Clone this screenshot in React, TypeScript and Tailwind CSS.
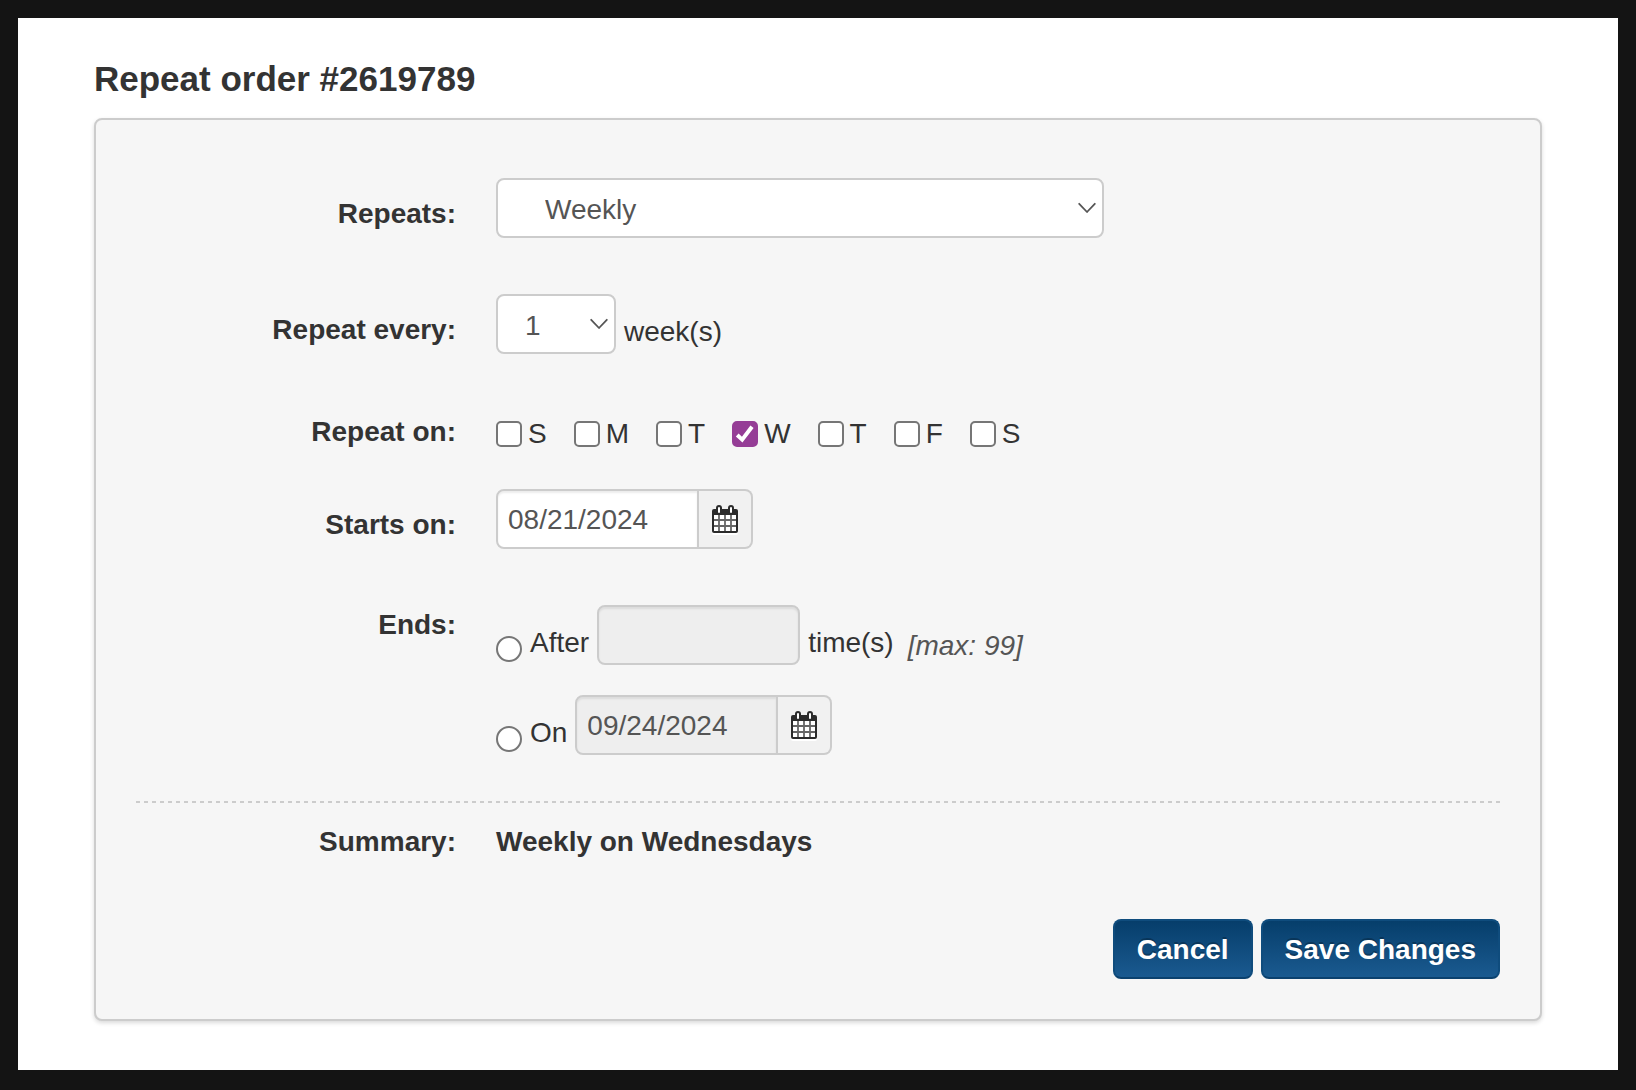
import React, { useState } from 'react';

const DAYS = [
  { id: 'sun', label: 'S' },
  { id: 'mon', label: 'M' },
  { id: 'tue', label: 'T' },
  { id: 'wed', label: 'W' },
  { id: 'thu', label: 'T' },
  { id: 'fri', label: 'F' },
  { id: 'sat', label: 'S' },
];

const Chevron: React.FC = () => (
  <svg
    className="pointer-events-none absolute top-6 right-2 h-3 w-[18px]"
    viewBox="0 0 18 12"
    fill="none"
    stroke="#555"
    strokeWidth="1.8"
    strokeLinecap="round"
    strokeLinejoin="round"
  >
    <path d="M1.2 1.8 L9 10 L16.8 1.8" />
  </svg>
);

const CalendarIcon: React.FC = () => (
  <svg className="h-[30px] w-[26px]" viewBox="0 0 26 30">
    <rect x="0" y="6" width="26" height="24" rx="2" fill="#fff" />
    <rect x="0" y="4" width="26" height="24" rx="2" fill="#2b2b2b" />
    <rect x="4" y="0" width="6" height="9" rx="3" fill="#2b2b2b" />
    <rect x="16" y="0" width="6" height="9" rx="3" fill="#2b2b2b" />
    <rect x="6" y="2" width="2" height="6" rx="1" fill="#fff" />
    <rect x="18" y="2" width="2" height="6" rx="1" fill="#fff" />
    <rect x="2" y="10" width="22" height="16" fill="#fff" />
    <path d="M7 10v16M13 10v16M19 10v16M2 15h22M2 21h22" stroke="#666" strokeWidth="1.8" />
  </svg>
);

interface RowProps {
  label: string;
  htmlFor?: string;
  className?: string;
  children: React.ReactNode;
}

const Row: React.FC<RowProps> = ({ label, htmlFor, className = '', children }) => (
  <div className={`flex items-start gap-10 ${className}`}>
    {htmlFor ? (
      <label htmlFor={htmlFor} className="w-80 shrink-0 pt-4 text-right font-bold">{label}</label>
    ) : (
      <span className="w-80 shrink-0 pt-4 text-right font-bold">{label}</span>
    )}
    {children}
  </div>
);

interface DateFieldProps {
  id: string;
  label: string;
  value: string;
  onChange: (value: string) => void;
  disabled?: boolean;
}

const DateField: React.FC<DateFieldProps> = ({ id, label, value, onChange, disabled }) => (
  <div className="flex h-[60px]">
    <input
      id={id}
      type="text"
      aria-label={label}
      value={value}
      disabled={disabled}
      onChange={(e) => onChange(e.target.value)}
      className="w-[203px] rounded-l-lg border-2 border-[#ccc] bg-white px-[10px] pt-[2px] text-[#555] shadow-[inset_0_2px_2px_rgba(0,0,0,0.075)] disabled:bg-[#eee]"
    />
    <button
      type="button"
      aria-label={`${label} calendar`}
      className="flex w-[54px] items-center justify-center rounded-r-lg border-2 border-l-0 border-[#ccc] bg-[#f1f1f1] pt-[2px]"
    >
      <CalendarIcon />
    </button>
  </div>
);

const selectClass =
  'h-[60px] w-full appearance-none rounded-lg border-2 border-[#ccc] bg-white pt-1 text-[#555]';
const radioClass =
  'mt-[13px] h-[26px] w-[26px] shrink-0 appearance-none rounded-full border-2 border-[#767676] bg-white checked:border-[8px] checked:border-[#953d96]';
const buttonClass =
  'h-[60px] rounded-lg border-2 border-[#0f4c7d] border-b-[#0b416e] bg-linear-to-b from-[#063e6b] to-[#1a5a90] px-[22px] pt-[2px] font-bold text-white [text-shadow:0_-2px_0_rgba(0,0,0,0.25)]';

export default function App() {
  const [repeats, setRepeats] = useState('Weekly');
  const [interval, setInterval] = useState('1');
  const [days, setDays] = useState<string[]>(['wed']);
  const [start, setStart] = useState('08/21/2024');
  const [ends, setEnds] = useState('');
  const [times, setTimes] = useState('');
  const [end, setEnd] = useState('09/24/2024');

  const toggleDay = (id: string) =>
    setDays(days.includes(id) ? days.filter((d) => d !== id) : [...days, id]);

  return (
    <div className="min-h-screen bg-[#141414] px-[18px] pt-[18px] pb-5 font-['Liberation_Sans',Arial,sans-serif] text-[28px] leading-10 text-[#333]">
      <main className="bg-white px-[76px] pt-[41px] pb-[49px]">
        <h1 className="text-[35px] leading-10 font-bold">Repeat order #2619789</h1>

        <form
          onSubmit={(e) => e.preventDefault()}
          className="mt-[19px] rounded-lg border-2 border-[#ccc] bg-[#f6f6f6] px-10 pt-[58px] pb-10 shadow-[0_2px_4px_rgba(0,0,0,0.15)]"
        >
          <Row label="Repeats:" htmlFor="repeats" className="h-[116px]">
            <div className="relative w-[608px]">
              <select
                id="repeats"
                value={repeats}
                onChange={(e) => setRepeats(e.target.value)}
                className={`${selectClass} pl-[47px]`}
              >
                <option>Daily</option>
                <option>Weekly</option>
                <option>Monthly</option>
              </select>
              <Chevron />
            </div>
          </Row>

          <Row label="Repeat every:" htmlFor="interval" className="h-[102px]">
            <div className="flex gap-2">
              <div className="relative w-[120px]">
                <select
                  id="interval"
                  value={interval}
                  onChange={(e) => setInterval(e.target.value)}
                  className={`${selectClass} pl-[27px]`}
                >
                  <option>1</option>
                  <option>2</option>
                  <option>3</option>
                  <option>4</option>
                </select>
                <Chevron />
              </div>
              <span className="pt-[18px]">week(s)</span>
            </div>
          </Row>

          <Row label="Repeat on:" className="h-[93px]">
            <div className="flex gap-[27px] pt-[18px]">
              {DAYS.map((day) => (
                <label key={day.id} className="flex items-center gap-[6px]">
                  <span className="grid">
                    <input
                      type="checkbox"
                      checked={days.includes(day.id)}
                      onChange={() => toggleDay(day.id)}
                      className="peer col-start-1 row-start-1 h-[26px] w-[26px] appearance-none rounded-[5px] border-2 border-[#767676] bg-white checked:border-[#953d96] checked:bg-[#953d96]"
                    />
                    <svg
                      className="pointer-events-none invisible col-start-1 row-start-1 h-[26px] w-[26px] peer-checked:visible"
                      viewBox="0 0 26 26"
                      fill="none"
                      stroke="#fff"
                      strokeWidth="4"
                    >
                      <path d="M5.2 14 L10.2 18.6 L20 5.8" />
                    </svg>
                  </span>
                  {day.label}
                </label>
              ))}
            </div>
          </Row>

          <Row label="Starts on:" htmlFor="start" className="h-[100px]">
            <DateField id="start" label="Starts on" value={start} onChange={setStart} />
          </Row>

          <Row label="Ends:">
            <div className="flex flex-col gap-[29px] pt-4">
              <div className="flex gap-2">
                <label className="flex gap-2 pt-[18px]">
                  <input
                    type="radio"
                    name="ends"
                    checked={ends === 'after'}
                    onChange={() => setEnds('after')}
                    className={radioClass}
                  />
                  After
                </label>
                <input
                  type="text"
                  aria-label="Number of times"
                  value={times}
                  disabled={ends !== 'after'}
                  onChange={(e) => setTimes(e.target.value)}
                  className="h-[60px] w-[203px] rounded-lg border-2 border-[#ccc] bg-white px-[10px] text-[#555] shadow-[inset_0_2px_2px_rgba(0,0,0,0.075)] disabled:bg-[#eee]"
                />
                <span className="pt-[18px]">time(s)</span>
                <em className="pt-[21px] pl-[6px] text-[#555]">[max: 99]</em>
              </div>
              <div className="flex gap-2">
                <label className="flex gap-2 pt-[18px]">
                  <input
                    type="radio"
                    name="ends"
                    checked={ends === 'on'}
                    onChange={() => setEnds('on')}
                    className={radioClass}
                  />
                  On
                </label>
                <DateField id="end" label="Ends on" value={end} onChange={setEnd} disabled={ends !== 'on'} />
              </div>
            </div>
          </Row>

          <hr className="mt-[46px] h-[2px] border-0 bg-[repeating-linear-gradient(to_right,#ccc_0_4px,transparent_4px_8px)]" />

          <Row label="Summary:" className="pt-[3px]">
            <output className="pt-4 font-bold">Weekly on Wednesdays</output>
          </Row>

          {/* Form actions */}
          <div className="mt-[57px] flex justify-end gap-2">
            <button type="button" className={buttonClass}>Cancel</button>
            <button type="submit" className={buttonClass}>Save Changes</button>
          </div>
        </form>
      </main>
    </div>
  );
}
